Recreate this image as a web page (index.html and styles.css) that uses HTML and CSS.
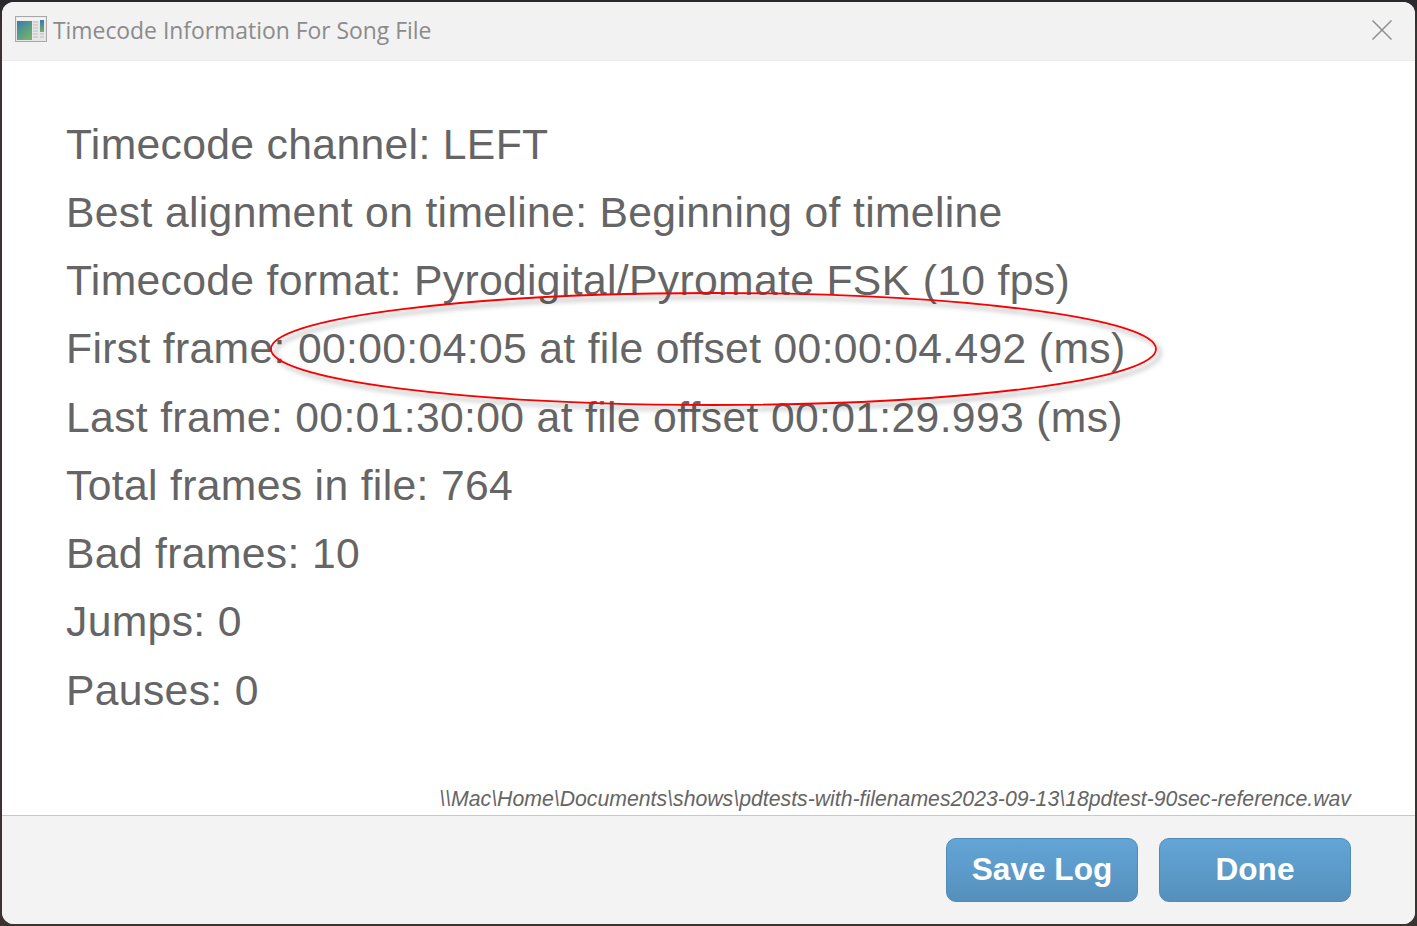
FILE: index.html
```html
<!DOCTYPE html>
<html lang="en">
<head>
<meta charset="utf-8">
<title>Timecode Information For Song File</title>
<link rel="stylesheet" href="styles.css">
</head>
<body>
<div class="window">
  <header class="titlebar">
    <svg class="app-icon" width="32" height="26" viewBox="0 0 32 26">
      <defs>
        <linearGradient id="pane" x1="0" y1="0" x2="0.6" y2="1">
          <stop offset="0" stop-color="#3c78ae"/>
          <stop offset="0.55" stop-color="#559c88"/>
          <stop offset="1" stop-color="#72ae6c"/>
        </linearGradient>
        <linearGradient id="side" x1="0" y1="0" x2="0" y2="1">
          <stop offset="0" stop-color="#3c78ae"/>
          <stop offset="1" stop-color="#72ae6c"/>
        </linearGradient>
      </defs>
      <rect x="0.5" y="0.5" width="31" height="25" fill="#e6e6e6" stroke="#a8a8a8"/>
      <rect x="1.5" y="1.5" width="29" height="3" fill="#f4f4f4"/>
      <rect x="2" y="5" width="15" height="19" fill="url(#pane)"/>
      <rect x="25" y="4" width="4" height="12" fill="url(#side)"/>
      <path d="M18 6h5M18 9h5M18 12h5M18 15h5M18 18h5M18 21h5M25 18h4M25 21h4" stroke="#bdbdbd" stroke-width="1"/>
    </svg>
    <span class="title">Timecode Information For Song File</span>
    <svg class="close" width="20" height="20" viewBox="0 0 20 20">
      <path d="M0.5 0.5L19.5 19.5M19.5 0.5L0.5 19.5" stroke="#8f8f8f" stroke-width="1.5" fill="none"/>
    </svg>
  </header>
  <main class="content">
    <p class="line">Timecode channel: LEFT</p>
    <p class="line">Best alignment on timeline: Beginning of timeline</p>
    <p class="line">Timecode format: Pyrodigital/Pyromate FSK (10 fps)</p>
    <p class="line">First frame: 00:00:04:05 at file offset 00:00:04.492 (ms)</p>
    <p class="line">Last frame: 00:01:30:00 at file offset 00:01:29.993 (ms)</p>
    <p class="line">Total frames in file: 764</p>
    <p class="line">Bad frames: 10</p>
    <p class="line">Jumps: 0</p>
    <p class="line">Pauses: 0</p>
    <p class="path">\\Mac\Home\Documents\shows\pdtests-with-filenames2023-09-13\18pdtest-90sec-reference.wav</p>
  </main>
  <footer class="footer">
    <button class="btn">Save Log</button>
    <button class="btn">Done</button>
  </footer>
  <svg class="annotation" width="1417" height="926" viewBox="0 0 1417 926">
    <defs>
      <filter id="shadow" x="-5%" y="-20%" width="110%" height="140%">
        <feDropShadow dx="4" dy="4" stdDeviation="2.5" flood-color="#000" flood-opacity="0.4"/>
      </filter>
    </defs>
    <ellipse cx="713.5" cy="349" rx="442.5" ry="56" fill="none" stroke="#f80000" stroke-width="1.8" filter="url(#shadow)"/>
  </svg>
</div>
</body>
</html>
```
FILE: styles.css
```css
* { box-sizing: border-box; }
html, body { margin: 0; height: 100%; overflow: hidden; }
body { background: linear-gradient(#28282c 0, #3a3331 30px); }
.window {
  position: relative;
  width: 1413px;
  height: 922px;
  margin: 2px 0 0 2px;
  display: flex;
  flex-direction: column;
  background: #fff;
  border-radius: 12px;
  overflow: hidden;
  font-family: "Liberation Sans", Arial, sans-serif;
}
.titlebar {
  flex: 0 0 59px;
  display: flex;
  align-items: center;
  padding: 0 23px 0 13px;
  background: #f2f2f2;
  border-bottom: 1px solid #ececec;
}
.app-icon { margin-right: 6px; margin-top: -5px; flex: none; }
.title {
  font-family: "Open Sans", sans-serif;
  font-size: 22.88px;
  color: #8b8b8b;
  flex: 1;
  margin-top: -1px;
}
.close { flex: none; margin-top: -3px; }
.content {
  flex: 1;
  display: flex;
  flex-direction: column;
  padding: 48.5px 64px 0 64px;
  color: #656565;
}
.line {
  margin: 0;
  font-size: 42.67px;
  letter-spacing: 0.34px;
  line-height: 68.25px;
  height: 68.25px;
}
.path {
  margin: auto 0 2px;
  text-align: right;
  font-style: italic;
  font-size: 21.25px;
  line-height: 28px;
  color: #656565;
}
.footer {
  flex: 0 0 109px;
  display: flex;
  justify-content: flex-end;
  gap: 21px;
  padding: 22px 64px 0 0;
  background: #f3f3f3;
  border-top: 1px solid #c8c8c8;
}
.btn {
  width: 192px;
  height: 64px;
  border: 1px solid #4f8bb3;
  border-radius: 10px;
  background: linear-gradient(#63a5d7, #5590bc);
  color: #fff;
  font-family: "Liberation Sans", Arial, sans-serif;
  font-weight: 700;
  font-size: 31.6px;
  padding: 0 0 2px;
}
.annotation {
  position: absolute;
  left: -2px;
  top: -2px;
  pointer-events: none;
}
```
